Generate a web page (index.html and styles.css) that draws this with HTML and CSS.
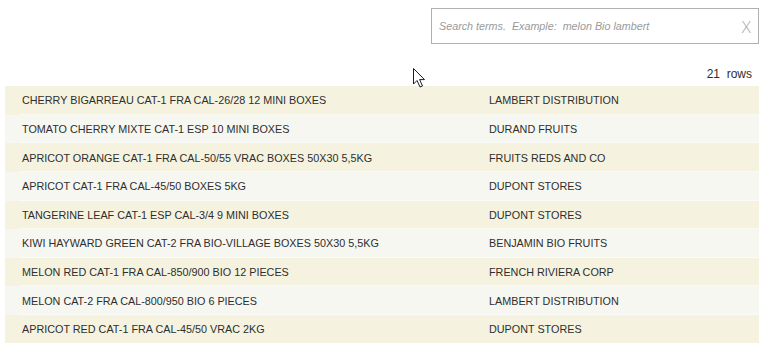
FILE: index.html
```html
<!DOCTYPE html>
<html>
<head>
<meta charset="utf-8">
<link rel="stylesheet" href="styles.css">
</head>
<body>
<div class="page">
  <div class="search">
    <span class="placeholder">Search terms.&nbsp; Example:&nbsp; melon Bio lambert</span>
    <span class="clear">X</span>
  </div>
  <div class="count">21&nbsp; rows</div>
  <div class="table">
    <div class="row odd"><div class="c1">CHERRY BIGARREAU CAT-1 FRA CAL-26/28 12 MINI BOXES</div><div class="c2">LAMBERT DISTRIBUTION</div></div>
    <div class="row even"><div class="c1">TOMATO CHERRY MIXTE CAT-1 ESP 10 MINI BOXES</div><div class="c2">DURAND FRUITS</div></div>
    <div class="row odd"><div class="c1">APRICOT ORANGE CAT-1 FRA CAL-50/55 VRAC BOXES 50X30 5,5KG</div><div class="c2">FRUITS REDS AND CO</div></div>
    <div class="row even"><div class="c1">APRICOT CAT-1 FRA CAL-45/50 BOXES 5KG</div><div class="c2">DUPONT STORES</div></div>
    <div class="row odd"><div class="c1">TANGERINE LEAF CAT-1 ESP CAL-3/4 9 MINI BOXES</div><div class="c2">DUPONT STORES</div></div>
    <div class="row even"><div class="c1">KIWI HAYWARD GREEN CAT-2 FRA BIO-VILLAGE BOXES 50X30 5,5KG</div><div class="c2">BENJAMIN BIO FRUITS</div></div>
    <div class="row odd"><div class="c1">MELON RED CAT-1 FRA CAL-850/900 BIO 12 PIECES</div><div class="c2">FRENCH RIVIERA CORP</div></div>
    <div class="row even"><div class="c1">MELON CAT-2 FRA CAL-800/950 BIO 6 PIECES</div><div class="c2">LAMBERT DISTRIBUTION</div></div>
    <div class="row odd"><div class="c1">APRICOT RED CAT-1 FRA CAL-45/50 VRAC 2KG</div><div class="c2">DUPONT STORES</div></div>
  </div>
  <svg class="cursor" width="16" height="22" viewBox="0 0 16 22">
    <path d="M1.5 1.5 L1.5 17 L5 13.5 L8 20 L10.5 19 L7.6 12.6 L12.5 12.6 Z" fill="#fff" stroke="#1a1a2a" stroke-width="1" stroke-linejoin="miter"/>
  </svg>
</div>
</body>
</html>
```
FILE: styles.css
```css
html, body {
  margin: 0;
  padding: 0;
  background: #fff;
}
.page {
  position: relative;
  padding: 8px 5px 0 5px;
  font-family: "Liberation Sans", Arial, sans-serif;
  color: #2e2e2e;
}
.search {
  margin-left: auto;
  width: 328px;
  height: 36px;
  box-sizing: border-box;
  border: 1px solid #b0b0b0;
  display: flex;
  align-items: center;
  justify-content: space-between;
  padding: 0 7px 0 7px;
}
.placeholder {
  font-style: italic;
  font-size: 10.75px;
  color: #9a9a9a;
}
.clear {
  font-family: "Open Sans", "DejaVu Sans", sans-serif;
  font-size: 17px;
  font-weight: 300;
  color: #a8a8a8;
  line-height: 1;
}
.count {
  text-align: right;
  font-size: 12px;
  padding: 23px 7px 0 0;
  height: 19px;
  line-height: 14px;
}
.table {
  display: flex;
  flex-direction: column;
}
.row {
  display: grid;
  grid-template-columns: 467px 1fr;
  height: 28.625px;
  flex: none;
  box-sizing: border-box;
  align-items: center;
  font-size: 10.8px;
  position: relative;
}
.row::after {
  content: "";
  position: absolute;
  left: 15px;
  right: 0;
  bottom: 0;
  height: 1px;
  background: rgba(255,255,255,0.55);
}
.odd { background: #f5f3e0; }
.even { background: #f7f7f1; }
.c1, .c2 {
  padding-left: 17px;
  white-space: nowrap;
}
.cursor {
  position: absolute;
  left: 412px;
  top: 67px;
}
```
